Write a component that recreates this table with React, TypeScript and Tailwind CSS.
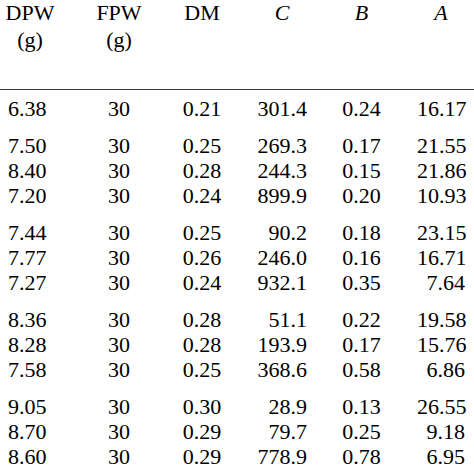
const groups: string[][][] = [
  [["6.38", "30", "0.21", "301.4", "0.24", "16.17"]],
  [
    ["7.50", "30", "0.25", "269.3", "0.17", "21.55"],
    ["8.40", "30", "0.28", "244.3", "0.15", "21.86"],
    ["7.20", "30", "0.24", "899.9", "0.20", "10.93"],
  ],
  [
    ["7.44", "30", "0.25", "90.2", "0.18", "23.15"],
    ["7.77", "30", "0.26", "246.0", "0.16", "16.71"],
    ["7.27", "30", "0.24", "932.1", "0.35", "7.64"],
  ],
  [
    ["8.36", "30", "0.28", "51.1", "0.22", "19.58"],
    ["8.28", "30", "0.28", "193.9", "0.17", "15.76"],
    ["7.58", "30", "0.25", "368.6", "0.58", "6.86"],
  ],
  [
    ["9.05", "30", "0.30", "28.9", "0.13", "26.55"],
    ["8.70", "30", "0.29", "79.7", "0.25", "9.18"],
    ["8.60", "30", "0.29", "778.9", "0.78", "6.95"],
  ],
]

// inner box width and alignment per column
const cols = [
  { box: "w-[50px]", align: "text-left pl-[3px]" },
  { box: "w-[50px]", align: "text-center" },
  { box: "w-[50px]", align: "text-center" },
  { box: "w-[50px]", align: "text-right" },
  { box: "w-[51px]", align: "text-center" },
  { box: "w-[48px]", align: "text-right" },
]

const grid = "grid grid-cols-[89px_83px_80px_79px_81px_52px] pl-[5px]"

export default function App() {
  return (
    <div
      className="w-[474px] h-[474px] bg-white text-black text-[22px] overflow-hidden"
      style={{ fontFamily: '"Liberation Serif", "Times New Roman", serif' }}
    >
      <div className={`${grid} h-[89px] leading-[27px] -mt-px`}>
        <div className="w-[50px] text-center">
          DPW
          <br />
          (g)
        </div>
        <div className="w-[50px] text-center">
          FPW
          <br />
          (g)
        </div>
        <div className="w-[50px] text-center">DM</div>
        <div className="w-[50px] text-center italic">C</div>
        <div className="w-[51px] text-center italic">B</div>
        <div className="w-[48px] text-center italic">A</div>
      </div>
      <div className="border-t-[1.5px] border-[#3a3a3a] mt-px" />
      <div className="pt-[6px] flex flex-col gap-[12px] leading-[25px]">
        {groups.map((g, gi) => (
          <div key={gi}>
            {g.map((row, ri) => (
              <div key={ri} className={grid}>
                {row.map((v, ci) => (
                  <div key={ci} className={`${cols[ci].box} ${cols[ci].align}`}>
                    {v}
                  </div>
                ))}
              </div>
            ))}
          </div>
        ))}
      </div>
    </div>
  )
}
